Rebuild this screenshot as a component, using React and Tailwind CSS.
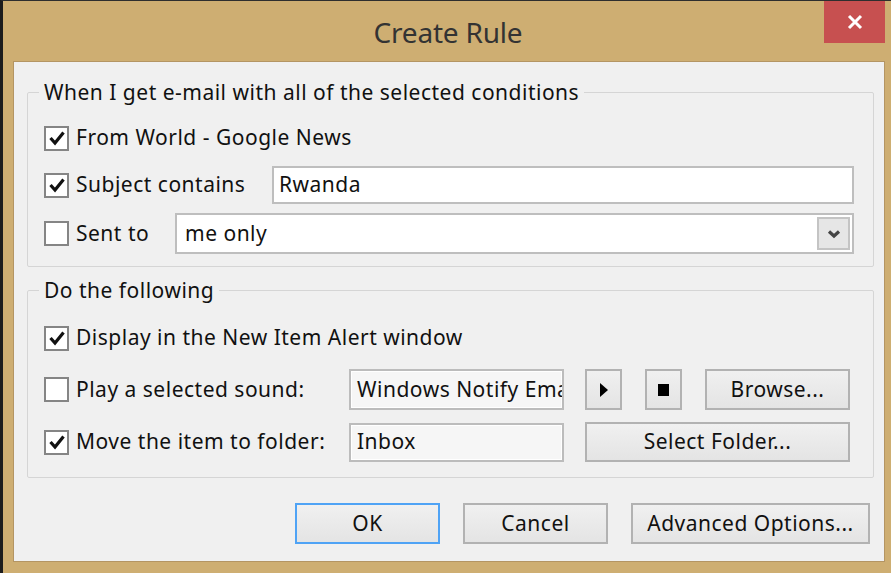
import React from "react";

const font = { fontFamily: '"Noto Sans", "Open Sans", Arial, sans-serif' };

function Check({ checked }) {
  return (
    <div className="w-[25px] h-[25px] shrink-0 border-2 border-[#858585] bg-white flex items-center justify-center">
      {checked && (
        <svg width="18" height="18" viewBox="0 0 18 18">
          <path d="M2.5 9 L7 14 L15.5 3.5" fill="none" stroke="#111" strokeWidth="3.2" strokeLinejoin="miter" />
        </svg>
      )}
    </div>
  );
}

function Btn({ className = "", children, primary }) {
  return (
    <div
      className={
        "flex items-center justify-center border-2 bg-gradient-to-b from-[#f0f0f0] to-[#e4e4e4] text-[21px] tracking-[0.5px] text-[#111] " +
        (primary ? "border-[#4fa3f5] " : "border-[#b2b2b2] ") +
        className
      }
    >
      {children}
    </div>
  );
}

function Group({ title, children, className = "" }) {
  return (
    <fieldset className={"border border-[#d5d5d5] rounded-[2px] " + className}>
      <legend className="ml-[11px] px-[5px] text-[21px] tracking-[0.5px] leading-[24px] text-[#111]">{title}</legend>
      {children}
    </fieldset>
  );
}

const label = "ml-[7px] text-[21px] tracking-[0.5px] text-[#111] whitespace-nowrap";

export default function App() {
  return (
    <div
      style={font}
      className="w-[891px] h-[573px] bg-[#ceae72] border-l-[3px] border-l-[#1c1c1c] border-t border-t-[#2e2e2e] flex flex-col overflow-hidden relative"
    >
      {/* Title bar */}
      <div className="h-[60px] flex items-center justify-center relative">
        <span className="text-[28px] text-[#333] ml-[2px] mt-[2px] tracking-[-0.2px]">Create Rule</span>
        <div className="absolute right-[6px] top-[-1px] w-[61px] h-[43px] bg-[#c75050] flex items-center justify-center">
          <svg width="16" height="16" viewBox="0 0 16 16">
            <path d="M2 2 L14 14 M14 2 L2 14" stroke="#fff" strokeWidth="3" />
          </svg>
        </div>
      </div>

      {/* Client area */}
      <div className="ml-[10px] w-[872px] h-[501px] bg-[#f0f0f0] border border-[#b49563] flex flex-col pl-[13px] pr-[10px]">
        <Group title="When I get e-mail with all of the selected conditions" className="mt-[18px] h-[187px]">
          <div className="flex flex-col pl-[16px] pr-[19px] pt-[14px]">
            <div className="h-[40px] flex items-center">
              <Check checked />
              <span className={label}>From World - Google News</span>
            </div>
            <div className="h-[40px] mt-[7px] flex items-center">
              <Check checked />
              <span className={label + " w-[196px]"}>Subject contains</span>
              <div className="flex-1 h-[38px] border-2 border-[#bebebe] bg-white flex items-center pl-[5px] text-[21px] tracking-[0.5px] text-[#111]">
                Rwanda
              </div>
            </div>
            <div className="h-[41px] mt-[8px] flex items-center">
              <Check checked={false} />
              <span className={label + " w-[99px]"}>Sent to</span>
              <div className="flex-1 h-[41px] border-2 border-[#bebebe] bg-white flex items-center pl-[8px] pr-[2px] text-[21px] tracking-[0.5px] text-[#111]">
                <span className="flex-1">me only</span>
                <div className="w-[33px] h-[33px] border-2 border-[#c4c4c4] bg-[#e6e6e6] flex items-center justify-center">
                  <svg width="14" height="10" viewBox="0 0 14 10">
                    <path d="M2 2.5 L7 7 L12 2.5" fill="none" stroke="#444" strokeWidth="3.2" />
                  </svg>
                </div>
              </div>
            </div>
          </div>
        </Group>

        <Group title="Do the following" className="mt-[11px] h-[200px]">
          <div className="flex flex-col pl-[16px] pt-[16px]">
            <div className="h-[40px] flex items-center">
              <Check checked />
              <span className={label}>Display in the New Item Alert window</span>
            </div>
            <div className="h-[41px] mt-[11px] flex items-center">
              <Check checked={false} />
              <span className={label + " w-[273px]"}>Play a selected sound:</span>
              <div className="w-[215px] h-[41px] border-2 border-[#bcbcbc] bg-[#f6f6f6] shadow-[inset_0_0_0_1px_#ffffff] flex items-center pl-[6px] text-[21px] tracking-[0.5px] text-[#111] overflow-hidden whitespace-nowrap">
                Windows Notify Email
              </div>
              <Btn className="ml-[21px] w-[37px] h-[41px]">
                <svg width="10" height="14" viewBox="0 0 10 14">
                  <path d="M1 0 L9 7 L1 14 Z" fill="#000" />
                </svg>
              </Btn>
              <Btn className="ml-[23px] w-[37px] h-[41px]">
                <div className="w-[11px] h-[12px] bg-black" />
              </Btn>
              <Btn className="ml-[23px] w-[145px] h-[41px]">Browse...</Btn>
            </div>
            <div className="h-[40px] mt-[12px] flex items-center">
              <Check checked />
              <span className={label + " w-[273px]"}>Move the item to folder:</span>
              <div className="w-[215px] h-[39px] border-2 border-[#bcbcbc] bg-[#f6f6f6] shadow-[inset_0_0_0_1px_#ffffff] flex items-center pl-[6px] text-[21px] tracking-[0.5px] text-[#111]">
                Inbox
              </div>
              <Btn className="ml-[21px] w-[265px] h-[40px]">Select Folder...</Btn>
            </div>
          </div>
        </Group>

        <div className="mt-[25px] flex justify-end pr-[4px] gap-[23px]">
          <Btn primary className="w-[145px] h-[41px]">OK</Btn>
          <Btn className="w-[145px] h-[41px]">Cancel</Btn>
          <Btn className="w-[239px] h-[41px]">Advanced Options...</Btn>
        </div>
      </div>
    </div>
  );
}
